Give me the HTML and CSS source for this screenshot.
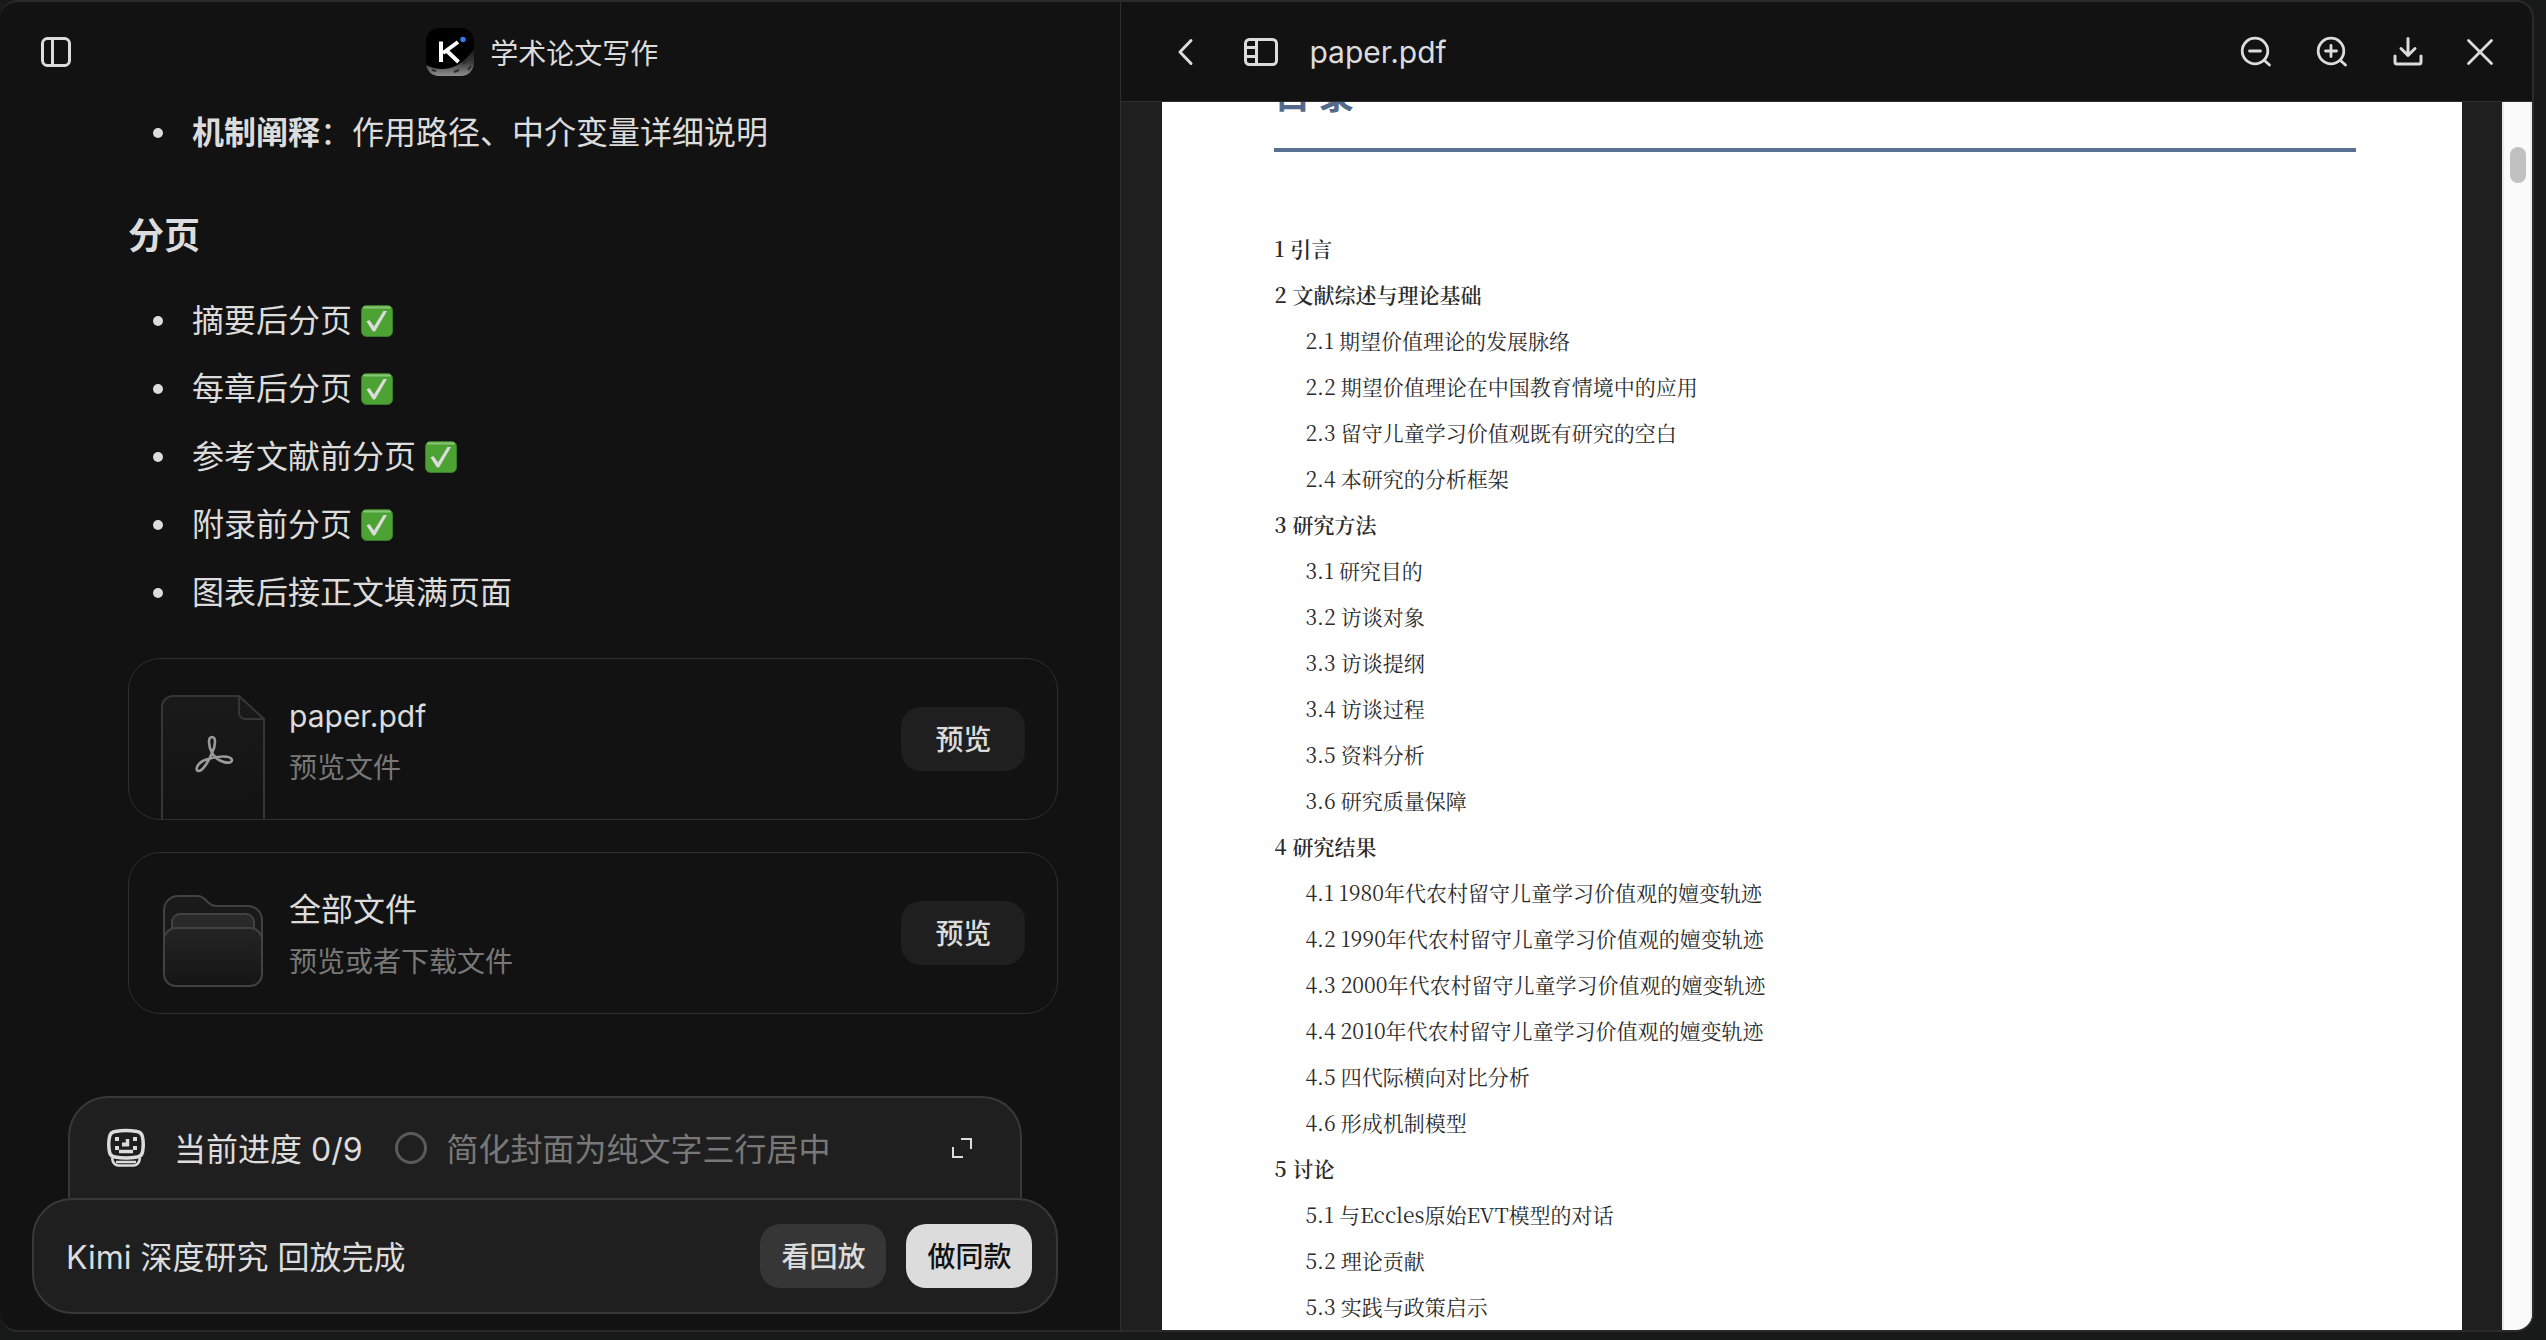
FILE: index.html
```html
<!DOCTYPE html>
<html lang="zh-CN">
<head>
  <meta charset="UTF-8">
  <meta name="viewport" content="width=device-width, initial-scale=1.0">
  <title>学术论文写作</title>
  <link rel="stylesheet" href="styles.css">
</head>
<body>

  <!-- shared icons -->
  <svg class="sprite" aria-hidden="true">
    <symbol id="check" viewBox="0 0 32 32">
      <rect x="0.5" y="0.5" width="31" height="31" rx="5" fill="#4ca233" stroke="#3a7d27"/>
      <path d="M3 2.5h26" stroke="#8cc47c" stroke-width="2" stroke-linecap="round"/>
      <path d="M5.5 16.5l3-1.5 4.5 6.5L22.500 6h3.500L14 26.500h-2z" fill="#dcdcdc"/>
    </symbol>
  </svg>

  <div class="window">
    <section class="chat">
      <header class="chat-header">
        <button class="icon-button" type="button" aria-label="侧边栏">
          <svg width="32" height="32" viewBox="0 0 32 32" fill="none" stroke="currentColor" stroke-width="3">
            <rect x="2.500" y="2.500" width="27" height="27" rx="5"/>
            <path d="M12.500 3v26"/>
          </svg>
        </button>
        <div class="chat-title">
          <svg width="48" height="48" viewBox="0 0 48 48" aria-hidden="true">
            <defs>
              <linearGradient id="moon" x1="0" y1="0" x2="0" y2="1">
                <stop offset="0" stop-color="#161616"/>
                <stop offset="0.5" stop-color="#3c3c3c"/>
                <stop offset="1" stop-color="#909090"/>
              </linearGradient>
              <clipPath id="logoClip"><rect width="48" height="48" rx="13"/></clipPath>
            </defs>
            <g clip-path="url(#logoClip)">
              <rect width="48" height="48" fill="#000"/>
              <path d="M0 37c8 4 16 5 24 3 10-3 17-9 24-19v27H0z" fill="url(#moon)"/>
              <path d="M6 42l4 1M28 44l5-2M37 36l4-4M42 42l3-4" stroke="#2c2c2c" stroke-width="2" fill="none"/>
            </g>
            <path d="M15 13.500v20.500M32 14L17 25M21 23l11.500 11" stroke="#fff" stroke-width="4" fill="none"/>
            <circle cx="37" cy="11.500" r="2.700" fill="#2f7df6"/>
          </svg>
          <h1>学术论文写作</h1>
        </div>
      </header>

      <div class="chat-body">
        <ul class="bullets">
          <li><strong>机制阐释</strong>：作用路径、中介变量详细说明</li>
        </ul>
        <h2>分页</h2>
        <ul class="bullets">
          <li>摘要后分页<svg class="check" role="img" aria-label="✅"><use href="#check"/></svg></li>
          <li>每章后分页<svg class="check" role="img" aria-label="✅"><use href="#check"/></svg></li>
          <li>参考文献前分页<svg class="check" role="img" aria-label="✅"><use href="#check"/></svg></li>
          <li>附录前分页<svg class="check" role="img" aria-label="✅"><use href="#check"/></svg></li>
          <li>图表后接正文填满页面</li>
        </ul>

        <div class="cards">
          <article class="card">
            <svg class="card-icon" width="104" height="124" viewBox="0 0 104 124" fill="none" aria-hidden="true">
              <defs>
                <linearGradient id="sheet" x1="0" y1="0" x2="0" y2="1">
                  <stop offset="0" stop-color="#1a1a1a"/>
                  <stop offset="1" stop-color="#121212"/>
                </linearGradient>
              </defs>
              <path d="M1 126V12A11 11 0 0 1 12 1h66l25 23v102" fill="url(#sheet)" stroke="#363636" stroke-width="2"/>
              <path d="M78 1v17a6 6 0 0 0 6 6h19" stroke="#363636" stroke-width="2"/>
              <path d="M51 58C47 50 47 42 51 42S55 50 51 58C48 66 41 77 37 76C33 74 38 66 47 64C56 61 70 60 71 65C71 70 57 68 51 58z" stroke="#9a9a9a" stroke-width="2.600"/>
            </svg>
            <div class="card-text">
              <h3 class="file-name">paper.pdf</h3>
              <p>预览文件</p>
            </div>
            <button class="button button-dark" type="button">预览</button>
          </article>

          <article class="card">
            <svg class="card-icon" width="104" height="124" viewBox="0 0 104 124" fill="none" stroke="#424242" stroke-width="2" aria-hidden="true">
              <defs>
                <linearGradient id="folder" x1="0" y1="0" x2="0" y2="1">
                  <stop offset="0" stop-color="#242424"/>
                  <stop offset="1" stop-color="#151515"/>
                </linearGradient>
              </defs>
              <path d="M3 83V21A14 14 0 0 1 17 7h20c8 0 9 10 18 10h32a14 14 0 0 1 14 14v52z" fill="#1a1a1a"/>
              <path d="M11 49V33a8 8 0 0 1 8-8h66a8 8 0 0 1 8 8v16z" fill="#292929"/>
              <rect x="3" y="39" width="98" height="58" rx="12" fill="url(#folder)"/>
            </svg>
            <div class="card-text">
              <h3>全部文件</h3>
              <p>预览或者下载文件</p>
            </div>
            <button class="button button-dark" type="button">预览</button>
          </article>
        </div>
      </div>

      <footer class="composer">
        <div class="progress">
          <svg width="40" height="40" viewBox="0 0 40 40" fill="none" stroke="#dcdcdc" aria-hidden="true">
            <path d="M9 3.500Q20 1.500 31 3.500Q35.500 4 36.500 9Q38 16 36.500 24Q35.500 28.500 31 29Q20 31 9 29Q4.500 28.500 3.500 24Q2 16 3.500 9Q4.500 4 9 3.500z" stroke-width="3.500"/>
            <path d="M6 30q1 7 6 7.500h16q5-.5 6-7.500M10 34h20" stroke-width="2.500"/>
            <path d="M9 11h4M27 11h4M9 20h4M27 20h4M16 16.500h7" stroke-width="4"/>
            <path d="M13 23.500h14M21.500 11v7" stroke-width="3.500"/>
          </svg>
          <span class="progress-label">当前进度 0/9</span>
          <span class="ring"></span>
          <span class="step">简化封面为纯文字三行居中</span>
          <button class="icon-button" type="button" aria-label="展开">
            <svg width="20" height="20" viewBox="0 0 20 20" fill="none" stroke="currentColor" stroke-width="2">
              <path d="M9 1h10v10M1 9v10h10"/>
            </svg>
          </button>
        </div>
        <div class="replay">
          <span class="replay-text">Kimi 深度研究 回放完成</span>
          <button class="button button-grey" type="button">看回放</button>
          <button class="button button-light" type="button">做同款</button>
        </div>
      </footer>
    </section>

    <section class="viewer">
      <header class="viewer-header">
        <button class="icon-button" type="button" aria-label="返回">
          <svg width="28" height="32" viewBox="0 0 28 32" fill="none" stroke="currentColor" stroke-width="3" stroke-linecap="round" stroke-linejoin="round">
            <path d="M20 4.500L9 16l11 11.500"/>
          </svg>
        </button>
        <button class="icon-button" type="button" aria-label="缩略图">
          <svg width="36" height="32" viewBox="0 0 36 32" fill="none" stroke="currentColor" stroke-width="3">
            <rect x="2.500" y="3.500" width="31" height="25" rx="4"/>
            <path d="M13.500 4v24M3 11.500h10M3 20.500h10"/>
          </svg>
        </button>
        <h2 class="file-name">paper.pdf</h2>
        <div class="tools">
          <button class="icon-button" type="button" aria-label="缩小">
            <svg width="36" height="36" viewBox="0 0 36 36" fill="none" stroke="currentColor" stroke-width="2.800" stroke-linecap="round">
              <circle cx="17" cy="17" r="12.800"/>
              <path d="M11.500 17h11M26.500 26.500l5 4.500"/>
            </svg>
          </button>
          <button class="icon-button" type="button" aria-label="放大">
            <svg width="36" height="36" viewBox="0 0 36 36" fill="none" stroke="currentColor" stroke-width="2.800" stroke-linecap="round">
              <circle cx="17" cy="17" r="12.800"/>
              <path d="M11.500 17h11M17 11.500v11M26.500 26.500l5 4.500"/>
            </svg>
          </button>
          <button class="icon-button" type="button" aria-label="下载">
            <svg width="36" height="36" viewBox="0 0 36 36" fill="none" stroke="currentColor" stroke-width="3" stroke-linecap="round" stroke-linejoin="round">
              <path d="M18 4.500V21M11 14.500l7 7 7-7M5 22v6q0 2 2 2h22q2 0 2-2v-6"/>
            </svg>
          </button>
          <button class="icon-button" type="button" aria-label="关闭">
            <svg width="28" height="28" viewBox="0 0 28 28" fill="none" stroke="currentColor" stroke-width="2.800" stroke-linecap="round">
              <path d="M2.500 2.500l23 23M25.500 2.500l-23 23"/>
            </svg>
          </button>
        </div>
      </header>

      <div class="viewer-body">
        <div class="page">
          <h2 class="page-title">目 录</h2>
          <ol class="toc">
            <li class="chapter"><span class="num">1</span>引言</li>
            <li class="chapter"><span class="num">2</span>文献综述与理论基础</li>
            <li><span class="num">2.1</span>期望价值理论的发展脉络</li>
            <li><span class="num">2.2</span>期望价值理论在中国教育情境中的应用</li>
            <li><span class="num">2.3</span>留守儿童学习价值观既有研究的空白</li>
            <li><span class="num">2.4</span>本研究的分析框架</li>
            <li class="chapter"><span class="num">3</span>研究方法</li>
            <li><span class="num">3.1</span>研究目的</li>
            <li><span class="num">3.2</span>访谈对象</li>
            <li><span class="num">3.3</span>访谈提纲</li>
            <li><span class="num">3.4</span>访谈过程</li>
            <li><span class="num">3.5</span>资料分析</li>
            <li><span class="num">3.6</span>研究质量保障</li>
            <li class="chapter"><span class="num">4</span>研究结果</li>
            <li><span class="num">4.1</span>1980年代农村留守儿童学习价值观的嬗变轨迹</li>
            <li><span class="num">4.2</span>1990年代农村留守儿童学习价值观的嬗变轨迹</li>
            <li><span class="num">4.3</span>2000年代农村留守儿童学习价值观的嬗变轨迹</li>
            <li><span class="num">4.4</span>2010年代农村留守儿童学习价值观的嬗变轨迹</li>
            <li><span class="num">4.5</span>四代际横向对比分析</li>
            <li><span class="num">4.6</span>形成机制模型</li>
            <li class="chapter"><span class="num">5</span>讨论</li>
            <li><span class="num">5.1</span>与Eccles原始EVT模型的对话</li>
            <li><span class="num">5.2</span>理论贡献</li>
            <li><span class="num">5.3</span>实践与政策启示</li>
          </ol>
        </div>
        <div class="scrollbar"><div class="thumb"></div></div>
      </div>
    </section>
  </div>

</body>
</html>
```
FILE: styles.css
```css
* {
  box-sizing: border-box;
  margin: 0;
  padding: 0;
}
body {
  height: 100vh;
  padding: 0 12px 8px 0;
  background: #171a19;
  color: #dcdcdc;
  font-family: Inter, "Noto Sans CJK SC", sans-serif;
  font-size: 32px;
  overflow: hidden;
}
.sprite {
  display: none;
}
.window {
  display: flex;
  height: 100%;
  border: 2px solid #2a2a2a;
  border-left: none;
  border-radius: 18px;
  background: #121212;
  overflow: hidden;
}
svg {
  display: block;
  flex-shrink: 0;
}
.icon-button {
  border: none;
  background: none;
  color: #dcdcdc;
  cursor: pointer;
}
.button {
  height: 64px;
  padding-bottom: 2px;
  border: none;
  border-radius: 20px;
  font-family: inherit;
  font-size: 28px;
  font-weight: 500;
  cursor: pointer;
}
.button-dark {
  width: 124px;
  background: #1f1f1f;
  color: #dcdcdc;
}
.button-grey {
  width: 126px;
  background: #363636;
  color: #dcdcdc;
}
.button-light {
  width: 126px;
  background: #dcdcdc;
  color: #121212;
}
.file-name {
  font-size: 30px;
  font-weight: 400;
}

/* chat */
.chat {
  display: flex;
  flex-direction: column;
  flex: 0 0 44.25%;
}
.chat-header {
  display: flex;
  align-items: center;
  height: 97px;
  padding: 3px 40px 0;
}
.chat-title {
  display: flex;
  align-items: center;
  justify-content: center;
  flex: 1;
  gap: 16px;
  padding-right: 68px;
}
.chat-title h1 {
  font-size: 28px;
  font-weight: 400;
}
.chat-body {
  flex: 1;
  min-height: 0;
  padding: 0 62px 0 128px;
  overflow: hidden;
}
.chat-body h2 {
  margin: 43px 0 25px;
  font-size: 36px;
  font-weight: 600;
  line-height: 52px;
}
.bullets {
  list-style: none;
}
.bullets li {
  display: flex;
  align-items: center;
  line-height: 68px;
}
.bullets li::before {
  content: "";
  width: 10px;
  height: 10px;
  margin: 0 29px 0 25px;
  border-radius: 50%;
  background: #dcdcdc;
}
.check {
  width: 32px;
  height: 32px;
  margin-left: 9px;
}
.cards {
  display: flex;
  flex-direction: column;
  gap: 32px;
  margin-top: 31px;
}
.card {
  display: flex;
  align-items: center;
  height: 162px;
  padding: 0 32px;
  border: 1px solid #2e2e2e;
  border-radius: 32px;
  overflow: hidden;
}
.card-icon {
  align-self: flex-end;
}
.card-text {
  flex: 1;
  padding: 5px 0 0 24px;
}
.card-text h3 {
  font-weight: 400;
  line-height: 52px;
}
.card-text h3:not(.file-name) {
  font-size: 32px;
}
.card-text p {
  color: #787878;
  font-size: 28px;
  line-height: 52px;
}

/* bottom bar */
.composer {
  padding: 0 62px 16px 32px;
}
.progress {
  display: flex;
  align-items: center;
  height: 102px;
  margin: 0 36px;
  padding: 0 48px 0 36px;
  border: 2px solid #383838;
  border-bottom: none;
  border-radius: 40px 40px 0 0;
  background: #1f1f1f;
}
.progress-label {
  margin: 0 32px 0 28px;
  padding-bottom: 2px;
}
.ring {
  width: 32px;
  height: 32px;
  margin-right: 20px;
  border: 3px solid #5a5a5a;
  border-radius: 50%;
}
.step {
  flex: 1;
  padding-bottom: 2px;
  color: #787878;
}
.replay {
  display: flex;
  align-items: center;
  gap: 20px;
  height: 116px;
  padding: 0 24px 0 32px;
  border: 2px solid #383838;
  border-radius: 40px;
  background: #1f1f1f;
}
.replay-text {
  flex: 1;
  padding-bottom: 2px;
}

/* pdf viewer */
.viewer {
  display: flex;
  flex-direction: column;
  flex: 1;
  min-width: 0;
  border-left: 1px solid #2e2e2e;
}
.viewer-header {
  display: flex;
  align-items: center;
  height: 100px;
  padding: 0 38px 0 50px;
  border-bottom: 1px solid #2e2e2e;
}
.viewer-header .icon-button + .icon-button {
  margin-left: 44px;
}
.viewer-header .file-name {
  flex: 1;
  margin-left: 30px;
}
.viewer-header .tools .icon-button + .icon-button {
  margin-left: 40px;
}
.tools {
  display: flex;
  align-items: center;
}
.viewer-body {
  display: flex;
  flex: 1;
  min-height: 0;
  padding-left: 41px;
  background: #1f1f1f;
  overflow: hidden;
}
.page {
  flex: 1;
  margin-right: 40px;
  padding: 0 106px 0 112px;
  background: #fff;
  color: #2b2b2b;
  font-family: "Noto Serif CJK SC", "Noto Serif SC", "Liberation Serif", "Noto Sans CJK SC", serif;
  font-size: 21px;
}
/* page is scrolled, the title runs under the toolbar */
.page-title {
  height: 91px;
  margin-top: -41px;
  border-bottom: 4px solid #5b7192;
  color: #53698b;
  font-family: "Noto Sans CJK SC", sans-serif;
  font-size: 36px;
  font-weight: 700;
  line-height: 64px;
}
.toc {
  padding-top: 73px;
  list-style: none;
}
.toc li {
  display: flex;
  padding-left: 31px;
  line-height: 46px;
  white-space: nowrap;
}
.toc .num {
  margin-right: 5px;
}
.toc .chapter {
  padding-left: 0;
  font-weight: 600;
}
.toc .chapter .num {
  margin-right: 6px;
}
.scrollbar {
  width: 30px;
  padding: 45px 4px 0 6px;
  border-left: 2px solid #e8e8e8;
  border-right: 2px solid #ededed;
  background: #fafafa;
}
.thumb {
  width: 16px;
  height: 36px;
  border-radius: 8px;
  background: #c1c1c1;
}
```
